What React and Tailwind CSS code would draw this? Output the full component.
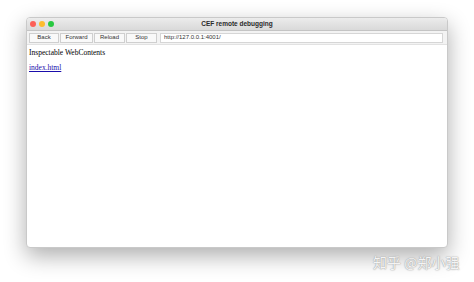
export default function App() {
  const buttons = [
    { label: "Back", w: "w-[30px]" },
    { label: "Forward", w: "w-[33px]" },
    { label: "Reload", w: "w-[31px]" },
    { label: "Stop", w: "w-[31px]" },
  ];

  return (
    <div className="w-[474px] h-[282px] bg-white overflow-hidden relative">
      {/* Window */}
      <div className="absolute left-[26px] top-[17px] w-[422px] h-[231px] flex flex-col rounded-[4px] overflow-hidden bg-white shadow-[0_8px_22px_rgba(0,0,0,0.32)] border border-[#c9c9c9]">
        {/* Title bar */}
        <div className="relative h-[13px] shrink-0 flex items-center bg-gradient-to-b from-[#ececec] to-[#d9d9d9] border-b border-[#c4c4c4]">
          <div className="flex items-center gap-[3px] pl-[3px]">
            <span className="w-[6px] h-[6px] rounded-full bg-[#fc5f57]" />
            <span className="w-[6px] h-[6px] rounded-full bg-[#fdbc2e]" />
            <span className="w-[6px] h-[6px] rounded-full bg-[#28c840]" />
          </div>
          <div className="absolute inset-0 flex items-center justify-center text-[6.5px] font-bold text-[#2a2a2a] font-['Liberation_Sans',sans-serif]">
            CEF remote debugging
          </div>
        </div>

        {/* Toolbar */}
        <div className="h-[14px] shrink-0 flex items-center pl-[2px] pr-[4px] bg-[#f3f3f3] border-b border-[#e2e2e2] font-['Liberation_Sans',sans-serif]">
          {buttons.map((b) => (
            <div
              key={b.label}
              className={`${b.w} h-[10px] mr-[1px] flex items-center justify-center bg-[#f9f9f9] border border-[#cfcfcf] text-[6px] text-[#333]`}
            >
              {b.label}
            </div>
          ))}
          <div className="flex-1 h-[10px] ml-[2px] flex items-center pl-[3px] bg-white border border-[#d6d6d6] text-[6px] text-[#333]">
            http://127.0.0.1:4001/
          </div>
        </div>

        {/* Content */}
        <div className="flex-1 px-[2px] pt-[2px] font-['Liberation_Serif',serif] text-black">
          <p className="text-[7.5px] leading-[11px]">Inspectable WebContents</p>
          <a className="block mt-[4px] text-[7.5px] leading-[11px] text-[#1a0dab] underline">index.html</a>
        </div>
      </div>

      {/* Watermark */}
      <div className="absolute left-[373px] top-[254px] text-[14px] leading-[16px] text-[#f4f4f4] font-['Noto_Sans_CJK_SC',sans-serif] [text-shadow:0_0_1px_#8a8a8a,0_0_2px_#bdbdbd]">
        知乎 @郑小强
      </div>
    </div>
  );
}
